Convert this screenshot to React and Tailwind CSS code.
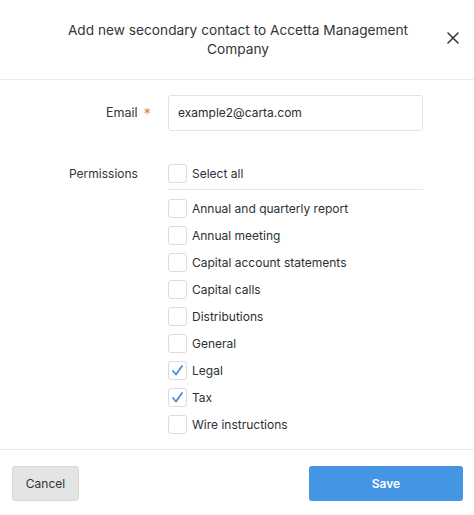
import React from "react";

const items = [
  ["Annual and quarterly report", false],
  ["Annual meeting", false],
  ["Capital account statements", false],
  ["Capital calls", false],
  ["Distributions", false],
  ["General", false],
  ["Legal", true],
  ["Tax", true],
  ["Wire instructions", false],
];

function Box({ checked }) {
  return (
    <span className="flex h-[19px] w-[19px] shrink-0 items-center justify-center rounded-[3px] border border-[#dcdcdc] bg-white">
      {checked && (
        <svg width="13" height="13" viewBox="0 0 13 13" fill="none">
          <path d="M2 7 L5 10.5 L11 2" stroke="#3f8fde" strokeWidth="1.8" strokeLinecap="round" strokeLinejoin="round" />
        </svg>
      )}
    </span>
  );
}

export default function App() {
  return (
    <div className="w-[474px] h-[515px] bg-white text-[#2d2f33] font-['Inter',sans-serif] flex flex-col">
      <div className="relative h-[80px] border-b border-[#ebebeb] flex items-center justify-center shrink-0">
        <div className="text-center text-[13.7px] leading-[19px] w-[352px] text-[#333538] ml-[2px]">
          Add new secondary contact to Accetta Management Company
        </div>
        <button className="absolute right-[11px] top-[28px] w-[20px] h-[20px] flex items-center justify-center">
          <svg width="12" height="12" viewBox="0 0 12 12">
            <path d="M1 1 L11 11 M11 1 L1 11" stroke="#333" strokeWidth="1.5" strokeLinecap="round" />
          </svg>
        </button>
      </div>

      <div className="flex-1 pt-[15px] text-[12px]">
        <div className="flex items-center">
          <div className="w-[168px] pr-[17px] flex justify-end items-center gap-[6px]">
            <span className="text-[#333] text-[12.5px]">Email</span>
            <span className="text-[#e8823f] text-[15px] leading-none">*</span>
          </div>
          <div className="w-[255px] h-[36px] border border-[#e2e2e2] rounded-[3px] flex items-center px-[9px] text-[#2a2c30]">
            example2@carta.com
          </div>
        </div>

        <div className="flex mt-[33px]">
          <div className="w-[168px] pl-[69px] pt-[1px] text-[#333]">Permissions</div>
          <div className="w-[255px]">
            <div className="flex items-center gap-[5px] h-[19px]">
              <Box checked={false} />
              <span>Select all</span>
            </div>
            <div className="border-b border-[#e5e5e5] mt-[6px] mb-[9px]" />
            <div className="flex flex-col gap-[8px]">
              {items.map(([label, c]) => (
                <div key={label} className="flex items-center gap-[5px] h-[19px]">
                  <Box checked={c} />
                  <span>{label}</span>
                </div>
              ))}
            </div>
          </div>
        </div>
      </div>

      <div className="h-[66px] border-t border-[#ebebeb] flex items-start justify-between px-[12px] pt-[16px] shrink-0">
        <button className="w-[67px] h-[35px] rounded-[3px] bg-[#e4e4e4] border border-[#d9d9d9] text-[12px] text-[#333] pt-[1px]">
          Cancel
        </button>
        <button className="w-[154px] h-[35px] rounded-[3px] bg-[#4495e4] text-white text-[12px] font-semibold mr-[-1px] pt-[1px]">
          Save
        </button>
      </div>
    </div>
  );
}
